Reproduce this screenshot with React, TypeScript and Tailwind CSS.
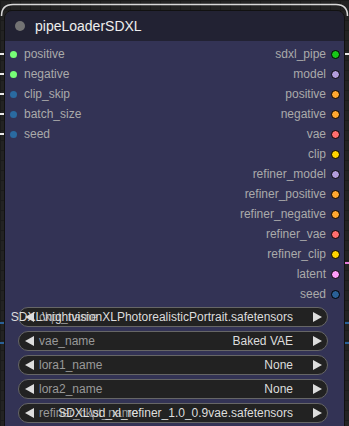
import React from "react";

const inputs = [
  { label: "positive", color: "#77ff77" },
  { label: "negative", color: "#77ff77" },
  { label: "clip_skip", color: "#2a6aa0" },
  { label: "batch_size", color: "#2a6aa0" },
  { label: "seed", color: "#2a6aa0" },
];

const outputs = [
  { label: "sdxl_pipe", color: "#17c817" },
  { label: "model", color: "#b39ddb" },
  { label: "positive", color: "#ffa931" },
  { label: "negative", color: "#ffa931" },
  { label: "vae", color: "#ff6e6e" },
  { label: "clip", color: "#ffd500" },
  { label: "refiner_model", color: "#b39ddb" },
  { label: "refiner_positive", color: "#ffa931" },
  { label: "refiner_negative", color: "#ffa931" },
  { label: "refiner_vae", color: "#ff6e6e" },
  { label: "refiner_clip", color: "#ffd500" },
  { label: "latent", color: "#ff9cf9" },
  { label: "seed", color: "#2a6096" },
];

const widgets = [
  { label: "ckpt_name", value: "SDXL\\nightvisionXLPhotorealisticPortrait.safetensors" },
  { label: "vae_name", value: "Baked VAE" },
  { label: "lora1_name", value: "None" },
  { label: "lora2_name", value: "None" },
  { label: "refiner_ckpt_name", value: "SDXL\\sd_xl_refiner_1.0_0.9vae.safetensors" },
];

function LeftArrow() {
  return (
    <svg width="9" height="10" viewBox="0 0 9 10" className="shrink-0">
      <polygon points="9,0 9,10 0,5" fill="#dddddd" />
    </svg>
  );
}

function RightArrow() {
  return (
    <svg width="9" height="10" viewBox="0 0 9 10" className="shrink-0">
      <polygon points="0,0 0,10 9,5" fill="#dddddd" />
    </svg>
  );
}

export default function App() {
  return (
    <div
      className="relative w-[349px] h-[426px] overflow-hidden bg-[#232323] bg-[linear-gradient(to_right,#1b1b1b_1px,transparent_1px),linear-gradient(to_bottom,#1b1b1b_1px,transparent_1px)] bg-[size:10px_10px]"
      style={{ fontFamily: '"Liberation Sans", Arial, sans-serif' }}
    >
      <svg className="absolute inset-0 pointer-events-none" width="349" height="426">
        {/* input links (left) */}
        {[54, 74, 94, 114, 134].map((y) => (
          <rect key={y} x="0" y={y - 1} width="4" height="2" fill="#e8e8e8" />
        ))}
        {/* sdxl_pipe output link */}
        <rect x="345" y="53" width="4" height="2" fill="#e8e8e8" />
        {/* pink link */}
        <rect x="345" y="262" width="4" height="2" fill="#e07ad8" />
        {/* blue links passing behind */}
        <rect x="0" y="322" width="349" height="2" fill="#2a6096" />
        <rect x="0" y="342" width="349" height="2" fill="#2a6096" />
        {/* selection outline */}
        <path
          d="M1.5,16 Q1.5,4.5 13,4.5 L336,4.5 Q347.5,4.5 347.5,16"
          fill="none"
          stroke="#d8d8d8"
          strokeWidth="1.5"
        />
      </svg>

      <div className="relative ml-[4px] mt-[10px] w-[341px] rounded-t-[8px] border border-[#111] overflow-visible">
        <div className="h-[30px] bg-[#222233] rounded-t-[7px] flex items-center pl-[10px]">
          <div className="w-[10px] h-[10px] rounded-full bg-[#737373]" />
          <span className="ml-[10px] text-[14px] leading-none text-[#eeeeee]">pipeLoaderSDXL</span>
        </div>

        <div className="bg-[#333355] pt-[3px] pb-[40px]">
          <div className="flex justify-between">
            <div className="flex flex-col">
              {inputs.map((s, i) => (
                <div key={i} className="h-[20px] flex items-center pl-[5px]">
                  <div className="w-[7px] h-[7px] rounded-full" style={{ backgroundColor: s.color }} />
                  <span className="ml-[7px] text-[12px] leading-none text-[#aaaaaa]">{s.label}</span>
                </div>
              ))}
            </div>
            <div className="flex flex-col items-end">
              {outputs.map((s, i) => (
                <div key={i} className="h-[20px] flex items-center justify-end pr-[4px]">
                  <span className="mr-[5px] text-[12px] leading-none text-[#aaaaaa]">{s.label}</span>
                  <div
                    className="w-[9px] h-[9px] rounded-full border border-black"
                    style={{ backgroundColor: s.color }}
                  />
                </div>
              ))}
            </div>
          </div>

          <div className="mt-[3px] flex flex-col gap-[4px] ml-[13px]">
            {widgets.map((w, i) => (
              <div
                key={i}
                className="relative w-[310px] h-[20px] rounded-full border border-[#666666] bg-[#222222] flex items-center pl-[6px]"
              >
                <LeftArrow />
                <span className="ml-[5px] text-[12px] leading-none text-[#999999] whitespace-nowrap">{w.label}</span>
                <span className="absolute right-[34px] text-[12px] leading-none text-[#dddddd] whitespace-nowrap">
                  {w.value}
                </span>
                <div className="absolute right-[5px] flex items-center">
                  <RightArrow />
                </div>
              </div>
            ))}
          </div>
        </div>
      </div>
    </div>
  );
}
